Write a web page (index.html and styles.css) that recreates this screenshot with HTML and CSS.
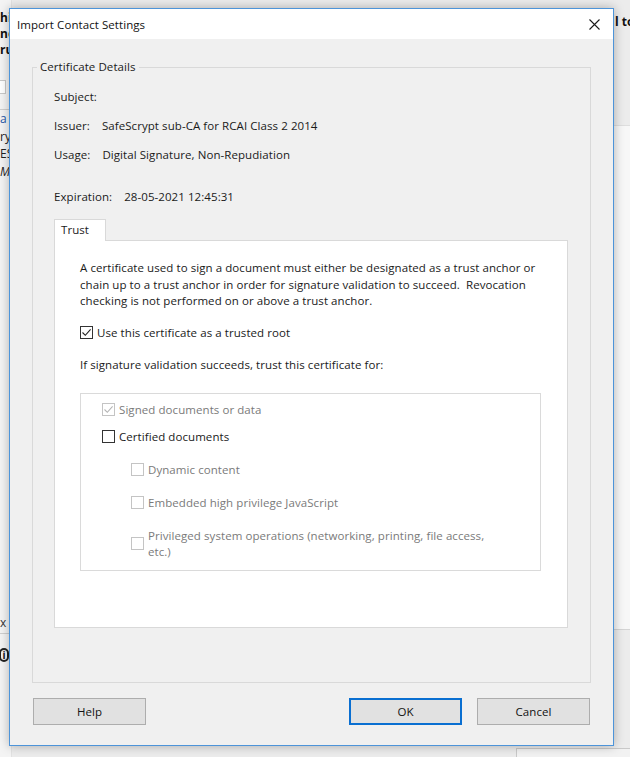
FILE: index.html
```html
<!DOCTYPE html>
<html>
<head>
<meta charset="utf-8">
<link rel="stylesheet" href="styles.css">
</head>
<body>
<div class="screen">
  <div class="backdrop">
    <div class="bd-left">
      <div class="bd-bold">
        <div>hi</div>
        <div>ne</div>
        <div>ru</div>
      </div>
      <div class="bd-check"></div>
      <div class="bd-list">
        <div class="bd-blue">a 2</div>
        <div>ry</div>
        <div>ES</div>
        <div class="bd-it">MA</div>
      </div>
      <div class="bd-x">x</div>
      <div class="bd-info">i</div>
    </div>
    <div class="bd-right">
      <div class="bd-bold bd-rtext">l to</div>
      <div class="bd-pane"></div>
      <div class="bd-foot"></div>
    </div>
    <div class="bd-bottom"></div>
  </div>

  <div class="dialog">
    <div class="titlebar">
      <span class="title">Import Contact Settings</span>
      <span class="close">
        <svg width="11" height="11" viewBox="0 0 11 11"><path d="M0.5 0.5 L10.5 10.5 M10.5 0.5 L0.5 10.5" stroke="#1a1a1a" stroke-width="1.1" fill="none"/></svg>
      </span>
    </div>
    <div class="body">
      <fieldset class="group">
        <legend>Certificate Details</legend>
        <div class="details">
          <div class="row"><span class="lbl">Subject:</span></div>
          <div class="row"><span class="lbl">Issuer:</span><span class="val">SafeScrypt sub-CA for RCAI Class 2 2014</span></div>
          <div class="row"><span class="lbl">Usage:</span><span class="val">Digital Signature, Non-Repudiation</span></div>
          <div class="row row-exp"><span class="lbl">Expiration:</span><span class="val">28-05-2021 12:45:31</span></div>
        </div>
        <div class="tabs"><div class="tab">Trust</div></div>
        <div class="panel">
          <p class="desc">A certificate used to sign a document must either be designated as a trust anchor or<br>chain up to a trust anchor in order for signature validation to succeed.&nbsp; Revocation<br>checking is not performed on or above a trust anchor.</p>
          <div class="check root">
            <span class="box"><svg width="11" height="11" viewBox="0 0 11 11"><path d="M1.5 5.5 L4.3 8.3 L9.6 2.4" stroke="#222" stroke-width="1.1" fill="none"/></svg></span>
            <span>Use this certificate as a trusted root</span>
          </div>
          <div class="ifline">If signature validation succeeds, trust this certificate for:</div>
          <div class="options">
            <div class="check disabled">
              <span class="box"><svg width="11" height="11" viewBox="0 0 11 11"><path d="M1.5 5.5 L4.3 8.3 L9.6 2.4" stroke="#b4b4b4" stroke-width="1.1" fill="none"/></svg></span>
              <span>Signed documents or data</span>
            </div>
            <div class="check certified">
              <span class="box"></span>
              <span>Certified documents</span>
            </div>
            <div class="sub">
              <div class="check disabled">
                <span class="box"></span>
                <span>Dynamic content</span>
              </div>
              <div class="check disabled">
                <span class="box"></span>
                <span>Embedded high privilege JavaScript</span>
              </div>
              <div class="check disabled multi">
                <span class="box"></span>
                <span>Privileged system operations (networking, printing, file access,<br>etc.)</span>
              </div>
            </div>
          </div>
        </div>
      </fieldset>
      <div class="buttons">
        <button class="btn">Help</button>
        <div class="spacer"></div>
        <button class="btn default">OK</button>
        <button class="btn">Cancel</button>
      </div>
    </div>
  </div>
</div>
</body>
</html>
```
FILE: styles.css
```css
* { box-sizing: border-box; }
html, body { margin: 0; padding: 0; }
body {
  font-family: "Open Sans", "Noto Sans", sans-serif;
  font-size: 11.5px;
  letter-spacing: 0.07px;
  color: #1a1a1a;
  background: #ececec;
}
.screen {
  position: relative;
  width: 630px;
  height: 757px;
  overflow: hidden;
  background: #ececec;
}

/* background window fragments */
.backdrop {
  position: absolute;
  inset: 0;
  display: flex;
  justify-content: space-between;
}
.bd-left {
  width: 12px;
  height: 100%;
  background: #f4f4f4;
  border-right: 1px solid #e2e2e2;
  overflow: hidden;
  white-space: nowrap;
}
.bd-bold {
  font-weight: 700;
  font-size: 12px;
  line-height: 16px;
  color: #111;
  letter-spacing: 0;
}
.bd-left .bd-bold {
  margin-top: 10px;
}
.bd-check {
  width: 12px;
  height: 14px;
  margin: 22px 0 0 -6px;
  border: 1px solid #c8c8c8;
  background: #fff;
}
.bd-list {
  margin-top: 15px;
  border-top: 1px solid #cfcfcf;
  padding-top: 0;
  font-size: 12px;
  line-height: 17.5px;
  color: #222;
  letter-spacing: 0;
}
.bd-blue { color: #1f57a8; }
.bd-it { font-style: italic; }
.bd-x {
  margin-top: 434px;
  font-size: 12px;
  color: #333;
  border-bottom: 1px solid #cfcfcf;
  padding-bottom: 2px;
}
.bd-info {
  width: 10px;
  height: 14px;
  margin: 14px 0 0 -1px;
  border: 2px solid #222;
  border-radius: 6px;
  font-weight: 700;
  font-size: 10px;
  line-height: 10px;
  text-align: center;
  color: #111;
}
.bd-right {
  width: 18px;
  height: 100%;
  display: flex;
  flex-direction: column;
}
.bd-rtext {
  margin-top: 14px;
  padding-left: 3px;
  white-space: nowrap;
  height: 111px;
}
.bd-pane {
  flex: 1;
  background: #f7f7f7;
  border-top: 1px solid #dedede;
}
.bd-foot {
  height: 128px;
  background: #ececec;
  border-top: 1px solid #d4d4d4;
}
.bd-bottom {
  position: absolute;
  left: 516px;
  top: 748px;
  width: 120px;
  height: 12px;
  border: 1px solid #c9c9c9;
  background: #f2f2f2;
}

/* dialog */
.dialog {
  position: absolute;
  left: 9px;
  top: 8px;
  width: 605px;
  height: 738px;
  border: 1px solid #4d94d9;
  background: #f0f0f0;
  box-shadow: 0 0 10px rgba(0, 0, 0, 0.28);
  display: flex;
  flex-direction: column;
  z-index: 2;
}
.titlebar {
  height: 30px;
  background: #fff;
  display: flex;
  align-items: center;
  padding-left: 7px;
  padding-right: 13px;
  flex-shrink: 0;
}
.title {
  flex: 1;
  color: #111;
}
.close {
  display: flex;
  width: 11px;
  height: 11px;
}
.body {
  flex: 1;
  display: flex;
  flex-direction: column;
  padding: 20px 22px 0 22px;
}
.group {
  margin: 0;
  padding: 0 22px 0 21px;
  border: 1px solid #d9d9d9;
  height: 624px;
  min-width: 0;
}
.group legend {
  margin-left: -17px;
  padding: 0 3px;
  line-height: 16px;
  color: #1a1a1a;
}
.details {
  padding-top: 14px;
  display: flex;
  flex-direction: column;
  gap: 13px;
}
.row {
  display: flex;
  line-height: 16px;
  height: 16px;
  white-space: nowrap;
}
.lbl { margin-right: 12px; }
.row-exp { margin-top: 13px; }

.tabs {
  margin-top: 14px;
  display: flex;
}
.tab {
  width: 52px;
  height: 22px;
  background: #fff;
  border: 1px solid #d9d9d9;
  border-bottom: none;
  padding-left: 6px;
  line-height: 19px;
  margin-bottom: -1px;
  position: relative;
  z-index: 1;
}
.panel {
  height: 388px;
  background: #fff;
  border: 1px solid #d9d9d9;
  padding: 19px 24px 0 25px;
}
.desc {
  margin: 0;
  line-height: 16.5px;
  white-space: nowrap;
}
.check {
  display: flex;
  align-items: center;
  line-height: 16px;
  white-space: nowrap;
}
.box {
  width: 13px;
  height: 13px;
  border: 1px solid #333;
  background: #fff;
  margin-right: 4px;
  flex-shrink: 0;
  display: flex;
  align-items: center;
  justify-content: center;
}
.root { margin-top: 15px; }
.ifline {
  margin-top: 16px;
  line-height: 16px;
}
.options {
  margin-top: 20px;
  width: 461px;
  height: 178px;
  border: 1px solid #dadada;
  padding: 8px 0 0 21px;
}
.disabled { color: #7a7a7a; }
.disabled .box { border-color: #c4c4c4; }
.certified { margin-top: 11px; }
.sub {
  padding-left: 29px;
  padding-top: 17px;
  display: flex;
  flex-direction: column;
  gap: 17px;
}
.multi { align-items: center; }

.buttons {
  margin-top: 15px;
  display: flex;
  gap: 15px;
  margin-left: 1px;
  margin-right: 1px;
}
.spacer { flex: 1; }
.btn {
  width: 113px;
  height: 27px;
  background: #e1e1e1;
  border: 1px solid #adadad;
  font-family: "Open Sans", "Noto Sans", sans-serif;
  font-size: 11.5px;
  letter-spacing: 0.07px;
  color: #111;
  padding: 0;
  margin: 0;
}
.btn.default {
  border: 2px solid #0a6fd1;
}
```
